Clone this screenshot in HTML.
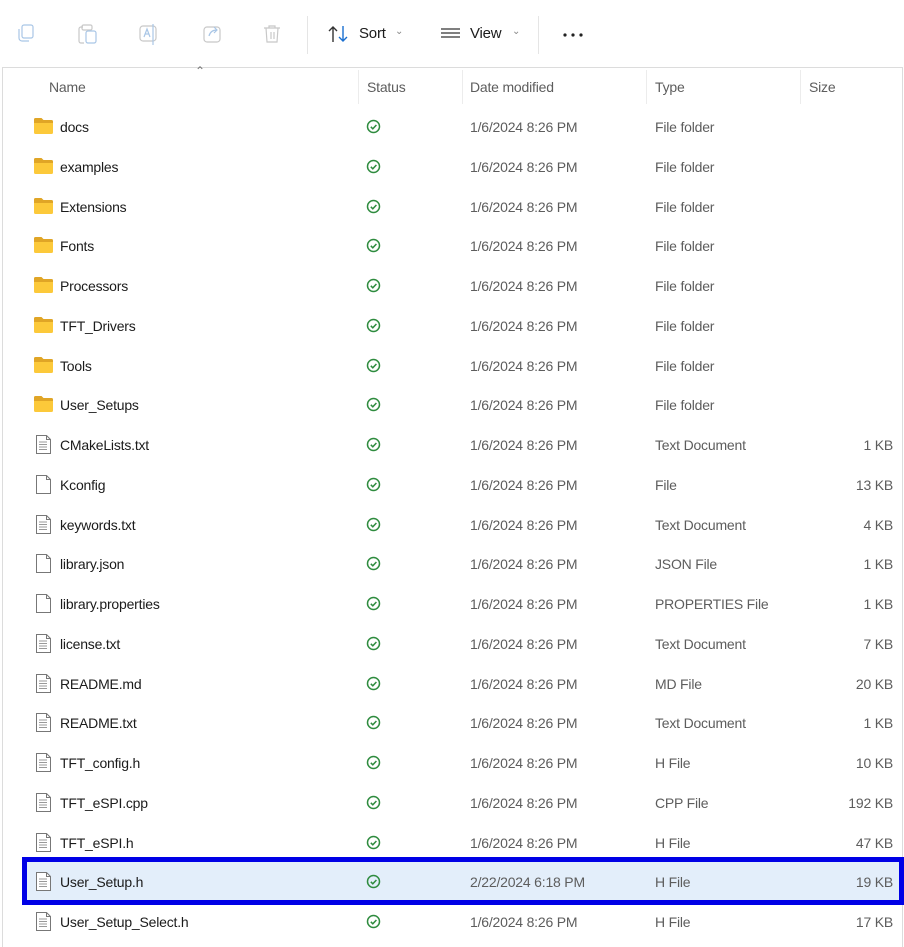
<!DOCTYPE html>
<html><head><style>
*{margin:0;padding:0;box-sizing:border-box}
body{width:904px;height:938px;background:#fff;position:relative;overflow:hidden;font-family:"Liberation Sans",sans-serif;font-size:14px;letter-spacing:-0.2px;color:#1b1b1b}
.a{position:absolute;white-space:nowrap}
.g{color:#5d5d5d}
.frame{position:absolute;left:2px;top:67px;width:901px;height:880px;border:1px solid #dcdcdc;border-bottom:none}
.sep{position:absolute;top:70px;width:1px;height:34px;background:#ececec}
.row{position:absolute;left:0;width:904px;height:40px}
.row .a{top:12px}
</style></head><body>
<div class="frame"></div>
<svg class="a" style="left:16px;top:22px" width="280" height="26" fill="none" stroke="#a9c6e6" stroke-width="1.2">
<rect x="6" y="3" width="11" height="13" rx="2"/><path d="M3 7v9a3 3 0 0 0 3 3h7"/>
<rect x="66" y="3" width="10" height="5" rx="1.5" stroke="#c8c8c8"/><path d="M67 5h-2a2 2 0 0 0-2 2v12a2 2 0 0 0 2 2h3" stroke="#c8c8c8"/><rect x="70" y="9" width="10" height="12" rx="2"/>
<rect x="124" y="4" width="16" height="15" rx="3" stroke="#c8c8c8"/><path d="M128 15l3-8 3 8M129 12h4"/><path d="M137 2v21"/>
<rect x="188" y="5" width="16" height="15" rx="3" stroke="#c8c8c8"/><path d="M193 14c1-4 4-6 8-6M198 5l3 3-3 3"/>
<path d="M248 6h16M253 6V4h6v2M250 6l1 14h10l1-14M255 10v7M258 10v7" stroke="#c8c8c8"/>
</svg>
<div class="a" style="left:307px;top:16px;width:1px;height:38px;background:#e5e5e5"></div>
<svg class="a" style="left:328px;top:24px" width="22" height="20" fill="none" stroke-width="1.4"><path d="M5 18V3M1 7l4-4 4 4" stroke="#333"/><path d="M15 2v15M11 13l4 4 4-4" stroke="#1a6fd0"/></svg>
<div class="a" style="left:359px;top:25px;font-size:15px">Sort</div>
<div class="a" style="left:395px;top:26px;font-size:10px;color:#888">&#8964;</div>
<svg class="a" style="left:440px;top:26px" width="22" height="16" stroke="#333" stroke-width="1.3"><path d="M1 3h19M1 7h19M1 11h19"/></svg>
<div class="a" style="left:470px;top:25px;font-size:15px">View</div>
<div class="a" style="left:512px;top:26px;font-size:10px;color:#888">&#8964;</div>
<div class="a" style="left:538px;top:16px;width:1px;height:38px;background:#e5e5e5"></div>
<svg class="a" style="left:562px;top:32px" width="24" height="6" fill="#222"><circle cx="3" cy="3" r="1.6"/><circle cx="11" cy="3" r="1.6"/><circle cx="19" cy="3" r="1.6"/></svg>
<div class="a" style="left:195px;top:64px;font-size:12px;color:#777">&#8963;</div>
<div class="a g" style="left:49px;top:79px">Name</div>
<div class="a g" style="left:367px;top:79px">Status</div>
<div class="a g" style="left:470px;top:79px">Date modified</div>
<div class="a g" style="left:655px;top:79px">Type</div>
<div class="a g" style="left:809px;top:79px">Size</div>
<div class="sep" style="left:358px"></div><div class="sep" style="left:462px"></div><div class="sep" style="left:646px"></div><div class="sep" style="left:800px"></div>
<div class="a" style="left:22px;top:857px;width:882px;height:48px;border:5px solid #0000e6;background:#e3eefa"></div>
<div id="rows"></div>
<script>
const F='<svg class="a" style="left:33px;top:10px" width="22" height="18"><path d="M1 2.5a1.5 1.5 0 0 1 1.5-1.5h6l2 2h8a1.5 1.5 0 0 1 1.5 1.5V6H1z" fill="#e0a526"/><path d="M1 6h19v9.5a1.5 1.5 0 0 1-1.5 1.5h-16A1.5 1.5 0 0 1 1 15.5z" fill="#fcc93a"/></svg>';
const D=(l)=>'<svg class="a" style="left:35px;top:9px" width="18" height="21" fill="none" stroke="#777" stroke-width="1"><path d="M1.5 1.5h10l4 4v14h-14z" fill="#fff"/><path d="M11.5 1.5v4h4"/>'+(l?'<path d="M4 8h8M4 10.5h8M4 13h8M4 15.5h8" stroke="#999"/>':'')+'</svg>';
const C='<svg class="a" style="left:366px;top:12px" width="15" height="15" fill="none" stroke="#2e8b3e" stroke-width="1.5"><circle cx="7.5" cy="7.5" r="6"/><path d="M4.8 7.8l2 2 3.6-3.8"/></svg>';
const R=[["docs",0],["examples",0],["Extensions",0],["Fonts",0],["Processors",0],["TFT_Drivers",0],["Tools",0],["User_Setups",0],
["CMakeLists.txt",1,"Text Document","1 KB"],["Kconfig",2,"File","13 KB"],["keywords.txt",1,"Text Document","4 KB"],["library.json",2,"JSON File","1 KB"],["library.properties",2,"PROPERTIES File","1 KB"],["license.txt",1,"Text Document","7 KB"],["README.md",1,"MD File","20 KB"],["README.txt",1,"Text Document","1 KB"],["TFT_config.h",1,"H File","10 KB"],["TFT_eSPI.cpp",1,"CPP File","192 KB"],["TFT_eSPI.h",1,"H File","47 KB"],["User_Setup.h",1,"H File","19 KB","2/22/2024 6:18 PM"],["User_Setup_Select.h",1,"H File","17 KB"]];
let h='';R.forEach((r,i)=>{const t=Math.round(107+39.75*i);
h+='<div class="row" style="top:'+t+'px">'+(r[1]==0?F:D(r[1]==1))+'<div class="a" style="left:60px">'+r[0]+'</div>'+C+'<div class="a g" style="left:470px">'+(r[4]||'1/6/2024 8:26 PM')+'</div><div class="a g" style="left:655px">'+(r[2]||'File folder')+'</div>'+(r[3]?'<div class="a g" style="right:11px">'+r[3]+'</div>':'')+'</div>';});
document.getElementById('rows').innerHTML=h;
</script>
</body></html>
